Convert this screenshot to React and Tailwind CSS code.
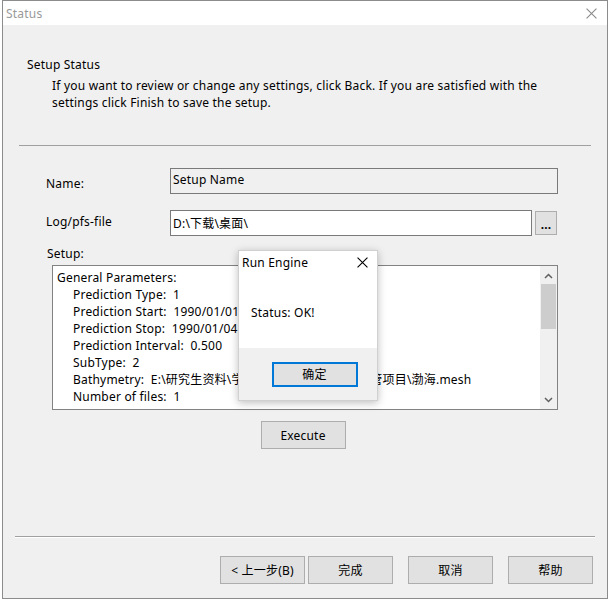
import React from "react";

const lines = [
  ["Prediction Type:", "1"],
  ["Prediction Start:", "1990/01/01"],
  ["Prediction Stop:", "1990/01/04"],
  ["Prediction Interval:", "0.500"],
  ["SubType:", "2"],
  ["Bathymetry:", "E:\\研究生资料\\学习资料\\环渤海洋环境监管项目\\渤海.mesh"],
  ["Number of files:", "1"],
];

const CloseX = ({ color = "#000", size = 10 }) => (
  <svg width={size} height={size} viewBox="0 0 10 10">
    <path d="M0.5 0.5 L9.5 9.5 M9.5 0.5 L0.5 9.5" stroke={color} strokeWidth="1" fill="none" />
  </svg>
);

const Btn = ({ children, className = "" }) => (
  <div
    className={
      "h-[28px] w-[85px] flex items-center justify-center bg-[#e1e1e1] border border-[#adadad] text-[12px] " +
      className
    }
  >
    {children}
  </div>
);

export default function App() {
  return (
    <div className="w-[610px] h-[601px] bg-white pl-[2px] font-['Noto_Sans','Noto_Sans_CJK_SC',sans-serif] text-[12px] leading-[17px] tracking-[0.2px] text-black relative">
      <div className="w-[606px] h-[599px] border border-[#8c8c8c] flex flex-col">
        {/* title bar */}
        <div className="h-[24px] bg-white flex items-center justify-between pl-[3px] pr-[10px] shrink-0">
          <span className="text-[#999999] text-[12px]">Status</span>
          <CloseX color="#8a8a8a" size={11} />
        </div>

        {/* body */}
        <div className="flex-1 bg-[#f0f0f0] flex flex-col">
          <div className="pl-[24px] pt-[31px]">Setup Status</div>
          <div className="pl-[49px] mt-[4px] w-[560px]">
            If you want to review or change any settings, click Back. If you are satisfied with the
            settings click Finish to save the setup.
          </div>

          <div className="mx-[16px] mt-[34px] border-t border-[#a0a0a0]" />

          {/* Name */}
          <div className="flex items-center mt-[22px]">
            <div className="w-[167px] pl-[43px] pt-[4px]">Name:</div>
            <div className="w-[388px] h-[26px] border border-[#7a7a7a] bg-[#f0f0f0] pl-[2px] pb-[3px] flex items-center">
              Setup Name
            </div>
          </div>

          {/* Log/pfs-file */}
          <div className="flex items-center mt-[16px]">
            <div className="w-[167px] pl-[43px] pb-[4px]">Log/pfs-file</div>
            <div className="w-[362px] h-[26px] border border-[#7a7a7a] bg-white pl-[2px] flex items-center">
              D:\下载\桌面\
            </div>
            <div className="ml-[3px] w-[22px] h-[24px] bg-[#e1e1e1] border border-[#adadad] flex items-center justify-center font-bold leading-none pt-[4px]">
              ...
            </div>
          </div>

          {/* Setup */}
          <div className="pl-[44px] mt-[9px]">Setup:</div>
          <div className="ml-[49px] mt-[3px] w-[506px] h-[145px] border border-[#828282] bg-white flex">
            <div className="flex-1 pl-[4px] pt-[3px] whitespace-nowrap overflow-hidden">
              <div>General Parameters:</div>
              {lines.map(([k, v]) => (
                <div key={k} className="pl-[16px]">
                  {k}&nbsp;&nbsp;{v}
                </div>
              ))}
            </div>
            <div className="w-[17px] ml-[1px] bg-[#f0f0f0] flex flex-col items-center">
              <svg width="9" height="6" viewBox="0 0 9 6" className="mt-[7px]">
                <path d="M1 5 L4.5 1.5 L8 5" stroke="#606060" strokeWidth="1.5" fill="none" />
              </svg>
              <div className="w-[15px] h-[45px] bg-[#cdcdcd] mt-[5px]" />
              <div className="flex-1" />
              <svg width="9" height="6" viewBox="0 0 9 6" className="mb-[6px]">
                <path d="M1 1 L4.5 4.5 L8 1" stroke="#606060" strokeWidth="1.5" fill="none" />
              </svg>
            </div>
          </div>

          <div className="flex justify-center mt-[11px] pr-[4px]">
            <Btn className="w-[85px]">Execute</Btn>
          </div>

          <div className="flex-1" />
          <div className="mx-[12px] border-t border-[#a0a0a0] border-b border-b-white" />

          <div className="flex justify-end pr-[14px] mt-[18px] mb-[14px]">
            <Btn className="mr-[3px]">&lt; 上一步(B)</Btn>
            <Btn className="mr-[15px]">完成</Btn>
            <Btn className="mr-[15px]">取消</Btn>
            <Btn>帮助</Btn>
          </div>
        </div>
      </div>

      {/* Run Engine message box */}
      <div className="absolute left-[238px] top-[250px] w-[140px] h-[151px] bg-white border border-[#d0d0d0] shadow-[0_2px_8px_rgba(0,0,0,0.25)] flex flex-col">
        <div className="flex items-center justify-between pl-[3px] pr-[9px] h-[23px]">
          <span className="text-[12px]">Run Engine</span>
          <CloseX size={11} />
        </div>
        <div className="flex-1 pl-[12px] pt-[30px]">Status: OK!</div>
        <div className="h-[52px] bg-[#f0f0f0] flex items-center justify-center pl-[13px]">
          <div className="w-[86px] h-[25px] border-2 border-[#0078d7] bg-[#e1e1e1] flex items-center justify-center text-[12px]">
            确定
          </div>
        </div>
      </div>
    </div>
  );
}
